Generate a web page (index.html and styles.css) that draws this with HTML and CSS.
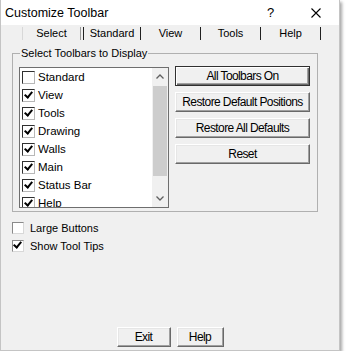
FILE: index.html
```html
<!DOCTYPE html>
<html lang="en">
<head>
  <meta charset="UTF-8" />
  <title>Customize Toolbar</title>
  <link rel="stylesheet" href="styles.css">
</head>
<body>

<div class="window">
  <div class="titlebar">
    <span class="title">Customize Toolbar</span>
    <span class="tb-btn">?</span>
    <span class="tb-btn">
      <svg width="10" height="10" viewBox="0 0 10 10"><path d="M0.5 0.5 L9.5 9.5 M9.5 0.5 L0.5 9.5" stroke="#000" stroke-width="1.1" fill="none"/></svg>
    </span>
  </div>

  <div class="tabs">
    <span class="tab first">Select</span>
    <span class="tab second">Standard</span>
    <span class="tab">View</span>
    <span class="tab">Tools</span>
    <span class="tab">Help</span>
  </div>

  <fieldset class="group">
    <legend>Select Toolbars to Display</legend>
    <div class="group-body">
      <div class="listbox">
        <div class="list-items">
          <div class="list-row"><span class="box"></span>Standard</div>
          <div class="list-row"><span class="box checked"></span>View</div>
          <div class="list-row"><span class="box checked"></span>Tools</div>
          <div class="list-row"><span class="box checked"></span>Drawing</div>
          <div class="list-row"><span class="box checked"></span>Walls</div>
          <div class="list-row"><span class="box checked"></span>Main</div>
          <div class="list-row"><span class="box checked"></span>Status Bar</div>
          <div class="list-row"><span class="box checked"></span>Help</div>
        </div>
        <div class="scrollbar">
          <div class="arrow"><svg width="8" height="5" viewBox="0 0 8 5"><polyline points="0.5,4.5 4,1 7.5,4.5" stroke="#606060" stroke-width="1.3" fill="none"/></svg></div>
          <div class="thumb"></div>
          <div class="track"></div>
          <div class="arrow"><svg width="8" height="5" viewBox="0 0 8 5"><polyline points="0.5,0.5 4,4 7.5,0.5" stroke="#606060" stroke-width="1.3" fill="none"/></svg></div>
        </div>
      </div>
      <div class="actions">
        <button class="btn default">All Toolbars On</button>
        <button class="btn">Restore Default Positions</button>
        <button class="btn">Restore All Defaults</button>
        <button class="btn">Reset</button>
      </div>
    </div>
  </fieldset>

  <div class="options">
    <div class="option"><span class="cb"></span>Large Buttons</div>
    <div class="option"><span class="cb checked"></span>Show Tool Tips</div>
  </div>

  <div class="footer">
    <button class="btn exit">Exit</button>
    <button class="btn help">Help</button>
  </div>
</div>

</body>
</html>
```

FILE: styles.css
```css
body {
  margin: 0;
  background: #ffffff;
  font-family: "Liberation Sans", Arial, sans-serif;
  color: #000;
}

.window {
  box-sizing: border-box;
  width: 340px;
  height: 351px;
  background: #f0f0f0;
  border: 1px solid #c4c4c4;
  border-top: none;
  box-shadow: 2px 2px 3px rgba(0, 0, 0, 0.35);
  display: flex;
  flex-direction: column;
}

.titlebar {
  height: 25px;
  background: #fff;
  display: flex;
  align-items: center;
  font-size: 12.5px;
}

.title {
  padding-left: 4px;
  flex: 1;
}

.tb-btn {
  width: 45px;
  text-align: center;
  font-size: 13px;
  display: flex;
  justify-content: center;
  align-items: center;
}

.tb-btn:last-child {
  width: 46px;
}

.tabs {
  height: 21px;
  padding: 2px 0 0 21px;
  box-sizing: border-box;
  display: flex;
  align-items: flex-start;
  font-size: 11px;
}

.tab {
  width: 59px;
  height: 13px;
  line-height: 13px;
  text-align: center;
  border-right: 1px solid #202020;
}

.tab.first {
  width: 57px;
  border-left: 1px solid #d8d8d8;
  border-right-color: #9a9a9a;
}

.tab.second {
  margin-left: 2px;
  width: 56px;
  border-left: 1px solid #202020;
}

.group {
  box-sizing: border-box;
  width: 306px;
  margin: 0 0 0 11px;
  padding: 7px 6px 3px 6px;
  border: 1px solid #b0b0b0;
  min-width: 0;
}

.group legend {
  font-size: 11px;
  line-height: 14px;
  padding: 0 1px;
  margin-left: 1px;
}

.group-body {
  display: flex;
  gap: 6px;
  align-items: flex-start;
}

.listbox {
  box-sizing: border-box;
  width: 150px;
  height: 141px;
  border: 1px solid #6e6e6e;
  background: #fff;
  display: flex;
  overflow: hidden;
}

.list-items {
  flex: 1;
  font-size: 11.5px;
}

.list-row {
  height: 18px;
  display: flex;
  align-items: center;
  padding-left: 2px;
}

.box {
  box-sizing: border-box;
  width: 13px;
  height: 13px;
  margin-right: 3px;
  background: #fff;
  border: 1px solid;
  border-color: #303030 #b8b8b8 #b8b8b8 #303030;
  position: relative;
}

.box.checked::after,
.cb.checked::after {
  content: "";
  position: absolute;
  left: 2px;
  top: 0px;
  width: 3px;
  height: 6px;
  border: solid #000;
  border-width: 0 2px 2px 0;
  transform: rotate(40deg);
  transform-origin: center;
  margin-left: 1px;
}

.scrollbar {
  width: 16px;
  background: #f0f0f0;
  display: flex;
  flex-direction: column;
}

.arrow {
  height: 17px;
  display: flex;
  align-items: center;
  justify-content: center;
}

.thumb {
  height: 90px;
  margin: 1px 1px 0 1px;
  background: #cdcdcd;
}

.track {
  flex: 1;
}

.actions {
  display: flex;
  flex-direction: column;
  gap: 6px;
  margin-top: -1px;
}

.btn {
  box-sizing: border-box;
  width: 135px;
  height: 20px;
  padding: 0;
  background: #f0f0f0;
  border: 1px solid;
  border-color: #ffffff #696969 #696969 #ffffff;
  box-shadow: inset -1px -1px #a0a0a0, inset 1px 1px #e6e6e6;
  font-family: "Liberation Sans", Arial, sans-serif;
  font-size: 12px;
  letter-spacing: -0.6px;
  color: #000;
}

.btn.default {
  border-color: #303030;
  box-shadow: inset 1px 1px #fff, inset -1px -1px #696969, inset -2px -2px #a0a0a0;
}

.options {
  margin: 7px 0 0 11px;
  font-size: 11px;
}

.option {
  height: 18px;
  display: flex;
  align-items: center;
}

.cb {
  box-sizing: border-box;
  width: 12px;
  height: 12px;
  margin-right: 6px;
  background: #fff;
  border: 1px solid;
  border-color: #8a8a8a #d8d8d8 #d8d8d8 #8a8a8a;
  position: relative;
}

.cb.checked::after {
  left: 1px;
  top: -1px;
}

.footer {
  margin-top: auto;
  padding-bottom: 3px;
  display: flex;
  justify-content: center;
  gap: 6px;
}

.btn.exit {
  width: 54px;
}

.btn.help {
  width: 47px;
}
```
